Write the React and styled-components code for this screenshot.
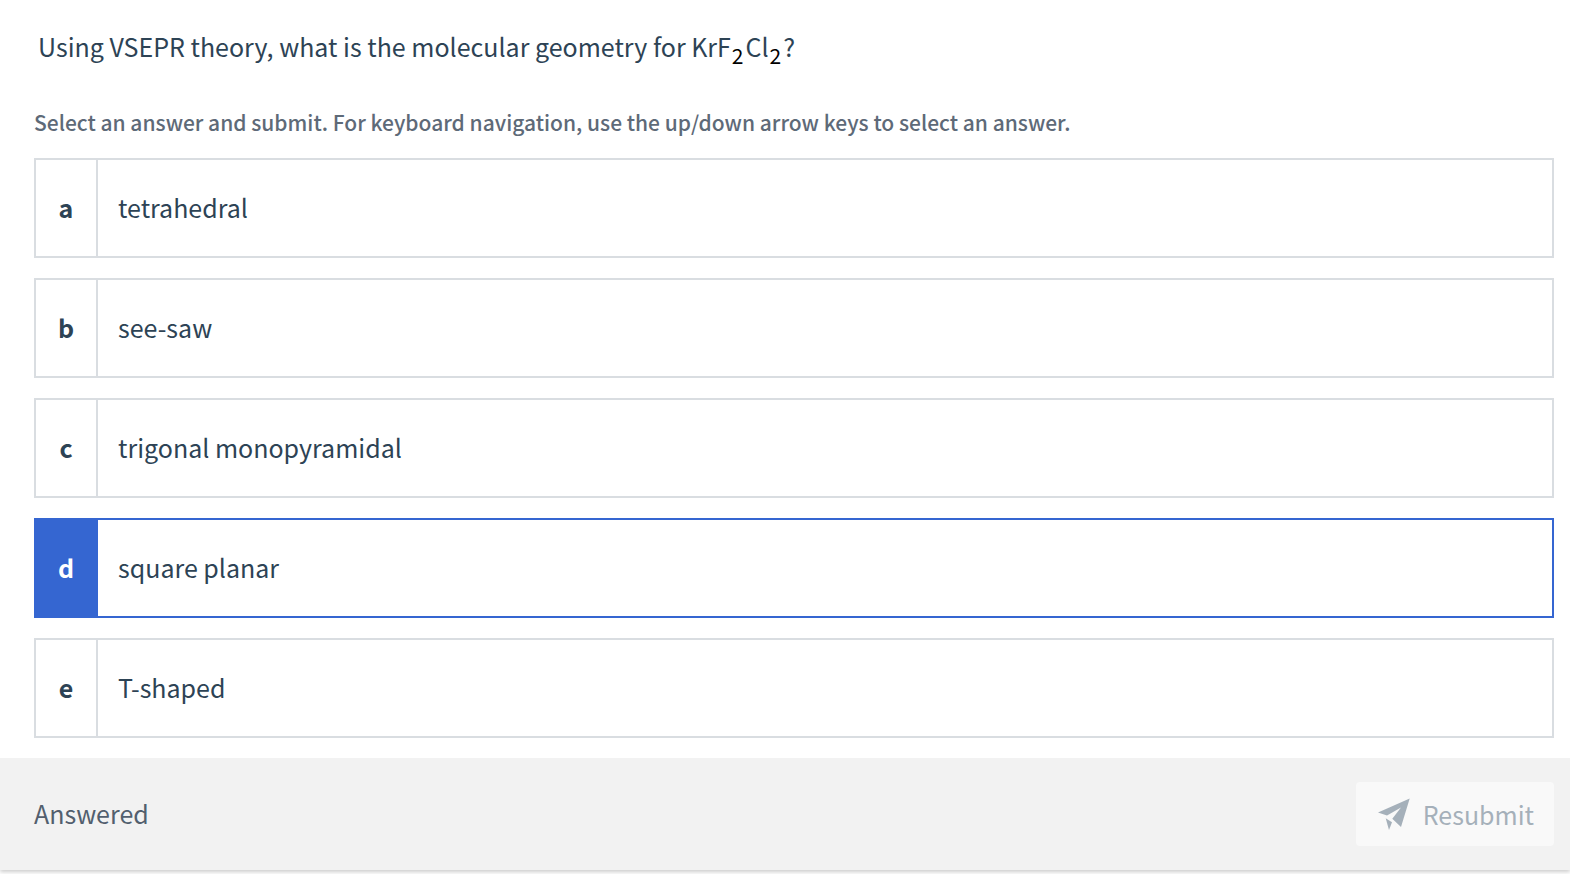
import React, { useState } from 'react';
import styled, { createGlobalStyle } from 'styled-components';

const GlobalStyle = createGlobalStyle`
  * {
    box-sizing: border-box;
  }

  body {
    display: flow-root;
    margin: 0;
    background-color: #fff;
    color: #2d4355;
    font-family: 'Noto Sans CJK SC', sans-serif;
    font-size: 25px;
    line-height: 40px;
  }
`;

const Card = styled.form`
  margin-bottom: 4px;
  box-shadow: 0 2px 4px rgba(0, 0, 0, 0.2);
`;

const Content = styled.div`
  padding: 26px 16px 20px 34px;
`;

const Question = styled.h1`
  margin: 0 0 40px;
  padding-left: 4px;
  font-size: 25px;
  font-weight: 400;
  line-height: 40px;
`;

const Subscript = styled.sub`
  margin: 0 2px 0 1px;
  color: #000;
  font-size: 21px;
  line-height: 0;
  vertical-align: -7px;
`;

const Options = styled.fieldset`
  display: flex;
  flex-direction: column;
  gap: 20px;
  margin: 0;
  padding: 0;
  border: 0;
`;

const Instructions = styled.legend`
  margin-bottom: 20px;
  padding: 0;
  color: #5e6a78;
  font-size: 21px;
  font-weight: 500;
  line-height: 32px;
`;

const Option = styled.label`
  position: relative;
  display: flex;
  min-height: 100px;
  border: 2px solid ${(props) => (props.$selected ? '#3566d1' : '#d9dde1')};
  cursor: pointer;
`;

const Radio = styled.input`
  position: absolute;
  inset: 0;
  width: 100%;
  height: 100%;
  margin: 0;
  opacity: 0;
  cursor: pointer;
`;

const Letter = styled.span`
  display: flex;
  align-items: center;
  justify-content: center;
  width: 62px;
  padding-bottom: 2px;
  border-right: 2px solid ${(props) => (props.$selected ? '#3566d1' : '#d9dde1')};
  background-color: ${(props) => (props.$selected ? '#3566d1' : '#fff')};
  color: ${(props) => (props.$selected ? '#fff' : 'inherit')};
  font-weight: 700;
`;

const OptionText = styled.span`
  display: flex;
  flex: 1;
  align-items: center;
  padding: 0 20px 2px;
`;

const Footer = styled.footer`
  display: flex;
  align-items: center;
  justify-content: space-between;
  padding: 24px 16px 24px 34px;
  background-color: #f2f2f2;
`;

const Status = styled.span`
  padding-bottom: 2px;
  color: #525f6e;
`;

const SubmitButton = styled.button`
  display: flex;
  align-items: center;
  gap: 13px;
  height: 64px;
  padding: 0 20px 0 22px;
  border: none;
  border-radius: 4px;
  background-color: #f9f9f9;
  color: #a5b0ba;
  font-family: inherit;
  font-size: 25px;
  line-height: 40px;
`;

const options = [
  { id: 'a', text: 'tetrahedral' },
  { id: 'b', text: 'see-saw' },
  { id: 'c', text: 'trigonal monopyramidal' },
  { id: 'd', text: 'square planar' },
  { id: 'e', text: 'T-shaped' },
];

function PlaneIcon() {
  return (
    <svg width="32" height="32" viewBox="0 0 32 32" fill="currentColor" aria-hidden="true">
      <path d="M31.7 0.5L0 14.5L9 17.5L23 9.5L14.3 20.8L23 29Z" />
      <path d="M7.7 20.2L14 24.2L11 32Z" />
    </svg>
  );
}

function App() {
  const [selected, setSelected] = useState('d');

  return (
    <>
      <GlobalStyle />
      <Card onSubmit={(e) => e.preventDefault()}>
        <Content>
          <Question>
            Using VSEPR theory, what is the molecular geometry for KrF<Subscript>2</Subscript>Cl
            <Subscript>2</Subscript>?
          </Question>
          <Options>
            <Instructions>
              Select an answer and submit. For keyboard navigation, use the up/down arrow keys to select an answer.
            </Instructions>
            {options.map((option) => (
              <Option key={option.id} htmlFor={option.id} $selected={selected === option.id}>
                <Radio
                  type="radio"
                  id={option.id}
                  name="answer"
                  value={option.id}
                  checked={selected === option.id}
                  onChange={(e) => setSelected(e.target.value)}
                />
                <Letter $selected={selected === option.id}>{option.id}</Letter>
                <OptionText>{option.text}</OptionText>
              </Option>
            ))}
          </Options>
        </Content>
        <Footer>
          <Status>Answered</Status>
          <SubmitButton type="submit" disabled>
            <PlaneIcon />
            Resubmit
          </SubmitButton>
        </Footer>
      </Card>
    </>
  );
}

export default App;
